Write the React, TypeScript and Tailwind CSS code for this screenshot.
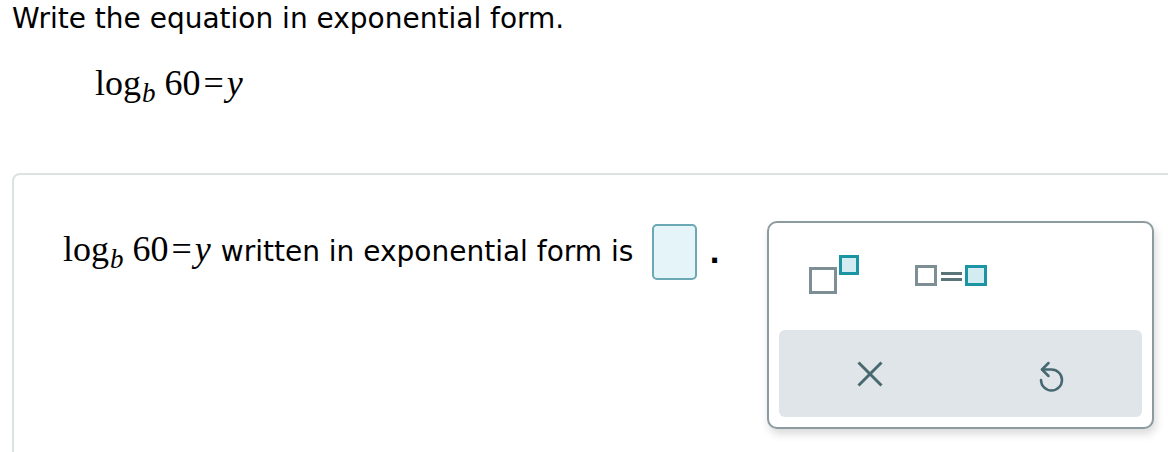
import React from "react";

const sans = { fontFamily: '"DejaVu Sans", Verdana, sans-serif' };
const serif = { fontFamily: '"Liberation Serif", "Times New Roman", serif' };

function LogExpr() {
  return (
    <span className="whitespace-nowrap text-[36px] leading-none text-black" style={serif}>
      log
      <sub className="italic text-[27px] relative top-[7px] align-baseline ml-[1px]">b</sub>
      <span className="ml-[9px]">60</span>
      <span className="mx-[3px]">=</span>
      <span className="italic">y</span>
    </span>
  );
}

function ExpIcon() {
  return (
    <svg width="52" height="41" viewBox="0 0 52 41">
      <rect x="2.5" y="14.5" width="25" height="24" fill="none" stroke="#7d8f94" strokeWidth="3" />
      <rect x="32.5" y="2.5" width="17" height="17" fill="#d2ecf2" stroke="#1b94a4" strokeWidth="3" />
    </svg>
  );
}

function EqIcon() {
  return (
    <svg width="74" height="23" viewBox="0 0 74 23">
      <rect x="2.5" y="2.5" width="19" height="18" fill="none" stroke="#7d8f94" strokeWidth="3" />
      <line x1="27" y1="9.5" x2="48" y2="9.5" stroke="#5b7479" strokeWidth="3" />
      <line x1="27" y1="15.5" x2="48" y2="15.5" stroke="#5b7479" strokeWidth="3" />
      <rect x="52.5" y="2.5" width="19" height="18" fill="#d2ecf2" stroke="#1b94a4" strokeWidth="3" />
    </svg>
  );
}

function XIcon() {
  return (
    <svg width="26" height="26" viewBox="0 0 26 26">
      <line x1="1.5" y1="1.5" x2="24.5" y2="24.5" stroke="#496970" strokeWidth="3" />
      <line x1="24.5" y1="1.5" x2="1.5" y2="24.5" stroke="#496970" strokeWidth="3" />
    </svg>
  );
}

function UndoIcon() {
  return (
    <svg width="28" height="34" viewBox="0 0 28 34" fill="none">
      <path d="M11.5 4 L5 10.5 L11.5 17" stroke="#466871" strokeWidth="2.5" strokeLinecap="round" strokeLinejoin="round" />
      <path d="M5 10.5 H14.5 A10.5 10.5 0 1 1 4 21" stroke="#466871" strokeWidth="2.5" strokeLinecap="round" />
    </svg>
  );
}

export default function App() {
  return (
    <div className="w-[1168px] h-[452px] overflow-hidden bg-white">
      <div className="pl-[12px] pt-[1px] text-[28px] leading-[36px] text-black" style={sans}>
        Write the equation in exponential form.
      </div>
      <div className="pl-[95px] mt-[28px] h-[41px]">
        <LogExpr />
      </div>
      <div className="ml-[12px] mt-[67px] w-[1200px] h-[320px] rounded-[8px] border-2 border-[#dce2e2] flex items-start pt-[46px]">
        <div className="w-[753px] mt-[3px] flex items-center h-[56px] pl-[49px]">
          <div className="flex items-baseline">
            <LogExpr />
            <span className="ml-[10px] text-[28px] text-black" style={sans}>
              written in exponential form is
            </span>
          </div>
          <span className="ml-[19px] w-[45px] h-[56px] rounded-[5px] border-2 border-[#6aa9b3] bg-[#e4f4f9]" />
          <span className="ml-[12px] relative top-[2px] text-[28px] font-bold text-black" style={sans}>.</span>
        </div>
        <div className="w-[387px] h-[208px] rounded-[10px] border-2 border-[#8b9b9f] bg-white shadow-[2px_5px_8px_rgba(0,0,0,0.15)] flex flex-col">
          <div className="flex items-start h-[107px] pl-[39px]">
            <div className="mt-[31px]">
              <ExpIcon />
            </div>
            <div className="ml-[54px] mt-[41px]">
              <EqIcon />
            </div>
          </div>
          <div className="mx-[10px] h-[87px] rounded-[6px] bg-[#dfe5e8] flex">
            <div className="flex-1 flex items-center justify-center">
              <XIcon />
            </div>
            <div className="flex-1 flex items-center justify-center pt-[5px]">
              <UndoIcon />
            </div>
          </div>
        </div>
      </div>
    </div>
  );
}
